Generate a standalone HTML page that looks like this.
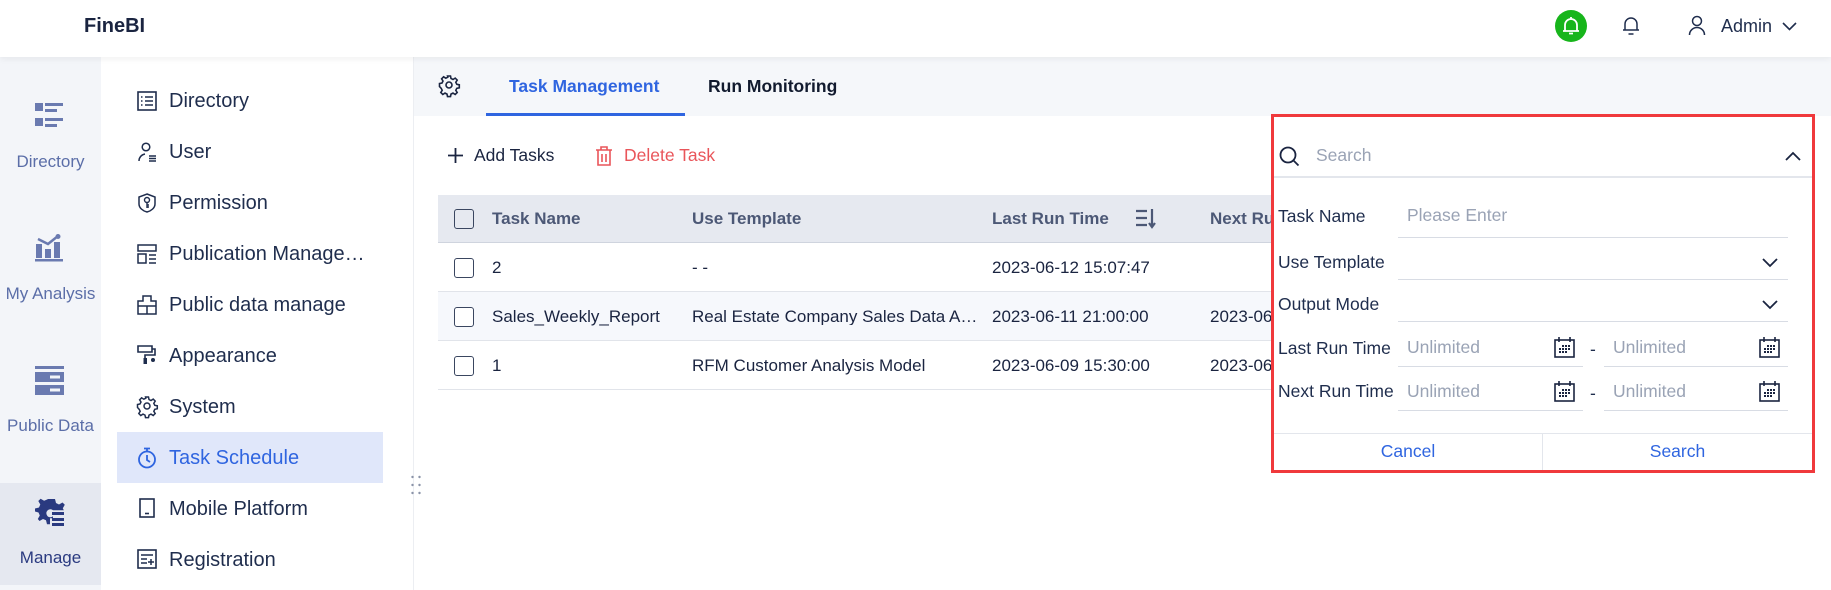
<!DOCTYPE html>
<html><head><meta charset="utf-8"><style>
*{box-sizing:border-box;margin:0;padding:0}
body{width:1831px;height:590px;overflow:hidden;background:#fff;font-family:"Liberation Sans",sans-serif;color:#1f2d4d;position:relative}
.a{position:absolute}
.t{position:absolute;white-space:nowrap;line-height:1}
svg{position:absolute;overflow:visible}
</style></head><body>
<!-- header -->
<div class="a" style="left:0;top:0;width:1831px;height:57px;background:#fff;box-shadow:0 2px 6px rgba(0,0,0,0.06);z-index:2"></div>
<div class="t" style="left:84px;top:16px;font-size:20px;font-weight:bold;color:#1a2440;z-index:3">FineBI</div>
<div class="a" style="left:1555px;top:10px;width:32px;height:32px;border-radius:50%;background:#17b51b;z-index:3"></div>
<svg style="left:1562px;top:16px;z-index:4" width="18" height="20" viewBox="0 0 18 20"><path d="M3 15V9a6 6 0 0 1 12 0v6h2H1h2M7 17.5h4M9 1v2" fill="none" stroke="#fff" stroke-width="1.8"/></svg>
<svg style="left:1622px;top:15px;z-index:4" width="18" height="22" viewBox="0 0 18 22"><path d="M3 15V9a6 6 0 0 1 12 0v6h2H1h2M6.5 19h5" fill="none" stroke="#1f2d4d" stroke-width="1.5"/></svg>
<svg style="left:1688px;top:15px;z-index:4" width="18" height="22" viewBox="0 0 18 22"><circle cx="9" cy="6" r="4.5" fill="none" stroke="#1f2d4d" stroke-width="1.5"/><path d="M1.5 20a7.5 7.5 0 0 1 15 0" fill="none" stroke="#1f2d4d" stroke-width="1.5"/></svg>
<div class="t" style="left:1721px;top:17px;font-size:18px;color:#1f2d4d;z-index:4">Admin</div>
<svg style="left:1782px;top:22px;z-index:4" width="15" height="9" viewBox="0 0 15 9"><path d="M1 1l6.5 6.5L14 1" fill="none" stroke="#1f2d4d" stroke-width="1.6"/></svg>

<!-- left rail -->
<div class="a" style="left:0;top:57px;width:101px;height:533px;background:#f3f5f9"></div>
<div class="a" style="left:0;top:483px;width:101px;height:102px;background:#e5e8f0"></div>
<svg style="left:35px;top:103px" width="28" height="26" viewBox="0 0 28 26"><g fill="#6a7ab0"><rect x="0" y="0" width="8" height="8"/><rect x="0" y="15" width="8" height="8"/><rect x="10" y="0" width="18" height="3"/><rect x="10" y="6" width="12" height="3"/><rect x="10" y="15" width="18" height="3"/><rect x="10" y="21" width="12" height="3"/></g></svg>
<div class="t" style="left:0;width:101px;text-align:center;top:153px;font-size:17px;color:#5b6ea8">Directory</div>
<svg style="left:35px;top:234px" width="28" height="28" viewBox="0 0 28 28"><g fill="#6a7ab0"><rect x="1" y="10" width="6" height="14"/><rect x="10" y="15" width="6" height="9"/><rect x="19" y="8" width="6" height="16"/><rect x="0" y="25" width="28" height="2.5"/></g><path d="M3 5l10 5 10-8" fill="none" stroke="#6a7ab0" stroke-width="2.5"/><circle cx="23" cy="2.5" r="2.5" fill="#6a7ab0"/></svg>
<div class="t" style="left:0;width:101px;text-align:center;top:285px;font-size:17px;color:#5b6ea8">My Analysis</div>
<svg style="left:35px;top:366px" width="29" height="29" viewBox="0 0 29 29"><g fill="#6a7ab0"><rect x="0" y="0" width="29" height="3"/><rect x="0" y="6" width="29" height="10"/><rect x="0" y="19" width="29" height="10"/></g><rect x="15" y="9.5" width="10" height="3" fill="#f3f5f9"/><rect x="15" y="22.5" width="10" height="3" fill="#f3f5f9"/></svg>
<div class="t" style="left:0;width:101px;text-align:center;top:417px;font-size:17px;color:#5b6ea8">Public Data</div>
<svg style="left:35px;top:498px" width="30" height="28" viewBox="0 0 30 28"><path d="M14 0l3 0 1 4 3 1.5 3.5-2 2.3 2.3-2 3.5 1 2H15a4 4 0 1 0 0 6v2H12v6H9l-1-4-3-1.3-3.5 2L-.2 20l2-3.5L.5 13.5-3 12.5v-3l4-1 1.3-3-2-3.5L2.6-.2l3.5 2 3-1.3L10 0z" transform="translate(3 1)" fill="#2a3a80"/><rect x="17" y="14" width="12" height="3" fill="#2a3a80"/><rect x="17" y="20" width="12" height="3" fill="#2a3a80"/><rect x="17" y="25" width="12" height="3" fill="#2a3a80"/></svg>
<div class="t" style="left:0;width:101px;text-align:center;top:549px;font-size:17px;color:#2a3a80">Manage</div>

<!-- second nav -->
<div class="a" style="left:413px;top:57px;width:1px;height:533px;background:#eceef2"></div>
<div class="a" style="left:117px;top:432px;width:266px;height:51px;background:#e0e7fa"></div>
<svg style="left:137px;top:91px" width="20" height="20" viewBox="0 0 20 20"><rect x="1" y="1" width="18" height="18" fill="none" stroke="#1f2d4d" stroke-width="1.6"/><path d="M4 6h1.5M8 6h8M4 10h1.5M8 10h8M4 14h1.5M8 14h8" stroke="#1f2d4d" stroke-width="1.5"/></svg>
<svg style="left:137px;top:142px" width="20" height="20" viewBox="0 0 20 20"><circle cx="9" cy="5" r="3.8" fill="none" stroke="#1f2d4d" stroke-width="1.5"/><path d="M2 19a7 7 0 0 1 6-7M12 14h7M12 16.5h7M12 19h7" fill="none" stroke="#1f2d4d" stroke-width="1.5"/></svg>
<svg style="left:137px;top:193px" width="20" height="20" viewBox="0 0 20 20"><path d="M10 1l8 3v7c0 4-4 7-8 8-4-1-8-4-8-8V4z" fill="none" stroke="#1f2d4d" stroke-width="1.5"/><circle cx="10" cy="7" r="2.5" fill="none" stroke="#1f2d4d" stroke-width="1.4"/><path d="M10 9.5V15M10 12h2M10 14h2" stroke="#1f2d4d" stroke-width="1.4"/></svg>
<svg style="left:137px;top:244px" width="20" height="20" viewBox="0 0 20 20"><path d="M1 1h18v6H1zM1 10h8v9H1zM12 11h7M12 15h7M12 19h7" fill="none" stroke="#1f2d4d" stroke-width="1.5"/></svg>
<svg style="left:137px;top:295px" width="20" height="20" viewBox="0 0 20 20"><path d="M6 1h8v5h5v13H1V6h5zM1 11h18M10 11v8" fill="none" stroke="#1f2d4d" stroke-width="1.5"/></svg>
<svg style="left:137px;top:345px" width="20" height="20" viewBox="0 0 20 20"><path d="M1 1h14v6H1zM15 4h3v6H8v3" fill="none" stroke="#1f2d4d" stroke-width="1.6"/><rect x="6.5" y="13" width="3.5" height="6" fill="#1f2d4d"/><circle cx="16" cy="15" r="2" fill="#1f2d4d"/></svg>
<svg style="left:137px;top:396px" width="20" height="20" viewBox="0 0 20 20"><path d="M8.5 1h3l.5 2.5 2 1 2.2-1.4 2 2-1.4 2.2 1 2 2.5.5v3l-2.5.5-1 2 1.4 2.2-2 2-2.2-1.4-2 1-.5 2.5h-3l-.5-2.5-2-1-2.2 1.4-2-2 1.4-2.2-1-2L.5 11.5v-3L3 8l1-2-1.4-2.2 2-2L6.8 3.2l2-1z" fill="none" stroke="#1f2d4d" stroke-width="1.5"/><circle cx="10" cy="10" r="3" fill="none" stroke="#1f2d4d" stroke-width="1.5"/></svg>
<svg style="left:137px;top:447px" width="20" height="22" viewBox="0 0 20 22"><circle cx="10" cy="12.5" r="8" fill="none" stroke="#2f65e0" stroke-width="1.8"/><path d="M7 1.5h6M10 1.5v3M10 8v5l3 2" fill="none" stroke="#2f65e0" stroke-width="1.8"/></svg>
<svg style="left:139px;top:498px" width="16" height="20" viewBox="0 0 16 20"><rect x="1" y="1" width="14" height="18" fill="none" stroke="#1f2d4d" stroke-width="1.6"/><path d="M6 15.5h4" stroke="#1f2d4d" stroke-width="1.6"/></svg>
<svg style="left:137px;top:549px" width="20" height="20" viewBox="0 0 20 20"><rect x="1" y="1" width="18" height="18" fill="none" stroke="#1f2d4d" stroke-width="1.6"/><path d="M4 6h12M4 10h6M4 14h6M14 10v6M11 13h6" stroke="#1f2d4d" stroke-width="1.5"/></svg>
<div class="t" style="left:169px;top:91px;font-size:20px">Directory</div>
<div class="t" style="left:169px;top:142px;font-size:20px">User</div>
<div class="t" style="left:169px;top:193px;font-size:20px">Permission</div>
<div class="t" style="left:169px;top:244px;font-size:20px">Publication Manage…</div>
<div class="t" style="left:169px;top:295px;font-size:20px">Public data manage</div>
<div class="t" style="left:169px;top:346px;font-size:20px">Appearance</div>
<div class="t" style="left:169px;top:397px;font-size:20px">System</div>
<div class="t" style="left:169px;top:448px;font-size:20px;color:#2f65e0">Task Schedule</div>
<div class="t" style="left:169px;top:499px;font-size:20px">Mobile Platform</div>
<div class="t" style="left:169px;top:550px;font-size:20px">Registration</div>
<svg style="left:411px;top:475px" width="10" height="20" viewBox="0 0 10 20"><g fill="#8a93a8"><circle cx="1.5" cy="2" r="1.2"/><circle cx="8.5" cy="2" r="1.2"/><circle cx="1.5" cy="10" r="1.2"/><circle cx="8.5" cy="10" r="1.2"/><circle cx="1.5" cy="18" r="1.2"/><circle cx="8.5" cy="18" r="1.2"/></g></svg>

<!-- main -->
<div class="a" style="left:414px;top:57px;width:1417px;height:59px;background:#f5f7fa"></div>
<svg style="left:439px;top:75px" width="20" height="20" viewBox="0 0 20 20"><path d="M8.5 1h3l.5 2.5 2 1 2.2-1.4 2 2-1.4 2.2 1 2 2.5.5v3l-2.5.5-1 2 1.4 2.2-2 2-2.2-1.4-2 1-.5 2.5h-3l-.5-2.5-2-1-2.2 1.4-2-2 1.4-2.2-1-2L.5 11.5v-3L3 8l1-2-1.4-2.2 2-2L6.8 3.2l2-1z" fill="none" stroke="#1a2440" stroke-width="1.6"/><circle cx="10" cy="10" r="3" fill="none" stroke="#1a2440" stroke-width="1.6"/></svg>
<div class="t" style="left:509px;top:78px;font-size:17.5px;font-weight:bold;color:#2f65e0">Task Management</div>
<div class="a" style="left:486px;top:113px;width:199px;height:3px;background:#2f65e0"></div>
<div class="t" style="left:708px;top:78px;font-size:17.5px;font-weight:bold;color:#111a2e">Run Monitoring</div>
<svg style="left:448px;top:148px" width="15" height="15" viewBox="0 0 15 15"><path d="M7.5 0v15M0 7.5h15" stroke="#1a2440" stroke-width="1.8"/></svg>
<div class="t" style="left:474px;top:147px;font-size:17.5px;color:#1a2440">Add Tasks</div>
<svg style="left:595px;top:146px" width="18" height="20" viewBox="0 0 18 20"><path d="M1 4h16M6 4V1h6v3M3 4v15h12V4M7 8v8M11 8v8" fill="none" stroke="#e9555a" stroke-width="1.6"/></svg>
<div class="t" style="left:624px;top:147px;font-size:17.5px;color:#e9555a">Delete Task</div>

<!-- table -->
<div class="a" style="left:438px;top:195px;width:840px;height:48px;background:#e6e9f0;border-bottom:1px solid #cfd4de"></div>
<div class="a" style="left:438px;top:243px;width:840px;height:49px;border-bottom:1px solid #e1e4ea"></div>
<div class="a" style="left:438px;top:292px;width:840px;height:49px;background:#f6f8fc;border-bottom:1px solid #e1e4ea"></div>
<div class="a" style="left:438px;top:341px;width:840px;height:49px;border-bottom:1px solid #e1e4ea"></div>
<div class="a" style="left:454px;top:209px;width:20px;height:20px;border:1.5px solid #3a4660;border-radius:3px"></div>
<div class="a" style="left:454px;top:258px;width:20px;height:20px;border:1.5px solid #3a4660;border-radius:3px;background:#fff"></div>
<div class="a" style="left:454px;top:307px;width:20px;height:20px;border:1.5px solid #3a4660;border-radius:3px;background:#fff"></div>
<div class="a" style="left:454px;top:356px;width:20px;height:20px;border:1.5px solid #3a4660;border-radius:3px;background:#fff"></div>
<div class="t" style="left:492px;top:210px;font-size:17px;font-weight:bold;color:#4c5876">Task Name</div>
<div class="t" style="left:692px;top:210px;font-size:17px;font-weight:bold;color:#4c5876">Use Template</div>
<div class="t" style="left:992px;top:210px;font-size:17px;font-weight:bold;color:#4c5876">Last Run Time</div>
<svg style="left:1135px;top:207px" width="22" height="22" viewBox="0 0 22 22"><path d="M1 4h11M1 11h11M1 18h11M17 2v18M14 16l3 4 3-4" fill="none" stroke="#4c5876" stroke-width="2.2"/></svg>
<div class="t" style="left:1210px;top:210px;font-size:17px;font-weight:bold;color:#4c5876">Next Ru</div>
<div class="t" style="left:492px;top:259px;font-size:17px;color:#1a2440">2</div>
<div class="t" style="left:692px;top:259px;font-size:17px;color:#1a2440">- -</div>
<div class="t" style="left:992px;top:259px;font-size:17px;color:#1a2440">2023-06-12 15:07:47</div>
<div class="t" style="left:492px;top:308px;font-size:17px;color:#1a2440">Sales_Weekly_Report</div>
<div class="t" style="left:692px;top:308px;font-size:17px;color:#1a2440;width:292px;overflow:hidden;text-overflow:ellipsis">Real Estate Company Sales Data Analysis</div>
<div class="t" style="left:992px;top:308px;font-size:17px;color:#1a2440">2023-06-11 21:00:00</div>
<div class="t" style="left:1210px;top:308px;font-size:17px;color:#1a2440">2023-06</div>
<div class="t" style="left:492px;top:357px;font-size:17px;color:#1a2440">1</div>
<div class="t" style="left:692px;top:357px;font-size:17px;color:#1a2440">RFM Customer Analysis Model</div>
<div class="t" style="left:992px;top:357px;font-size:17px;color:#1a2440">2023-06-09 15:30:00</div>
<div class="t" style="left:1210px;top:357px;font-size:17px;color:#1a2440">2023-06</div>

<!-- panel -->
<div class="a" style="left:1271px;top:114px;width:544px;height:359px;background:#fff;border:3px solid #f0393c;z-index:5"></div>
<div class="a" style="left:1274px;top:176px;width:538px;height:2px;background:#e3e6ec;z-index:6"></div>
<svg style="left:1279px;top:146px;z-index:6" width="21" height="21" viewBox="0 0 21 21"><circle cx="9" cy="9" r="7.5" fill="none" stroke="#1a2440" stroke-width="1.8"/><path d="M14.5 14.5l5 5" stroke="#1a2440" stroke-width="1.8"/></svg>
<div class="t" style="left:1316px;top:147px;font-size:17.5px;color:#9aa3b5;z-index:6">Search</div>
<svg style="left:1785px;top:152px;z-index:6" width="16" height="9" viewBox="0 0 16 9"><path d="M1 8l7-7 7 7" fill="none" stroke="#1a2440" stroke-width="1.8"/></svg>
<div class="t" style="left:1278px;top:208px;font-size:17.5px;z-index:6">Task Name</div>
<div class="t" style="left:1407px;top:207px;font-size:17.5px;color:#9aa3b5;z-index:6">Please Enter</div>
<div class="a" style="left:1398px;top:237px;width:390px;height:1px;background:#d8dce4;z-index:6"></div>
<div class="t" style="left:1278px;top:254px;font-size:17.5px;z-index:6">Use Template</div>
<svg style="left:1762px;top:258px;z-index:6" width="16" height="9" viewBox="0 0 16 9"><path d="M1 1l7 7 7-7" fill="none" stroke="#1a2440" stroke-width="1.8"/></svg>
<div class="a" style="left:1398px;top:279px;width:390px;height:1px;background:#d8dce4;z-index:6"></div>
<div class="t" style="left:1278px;top:296px;font-size:17.5px;z-index:6">Output Mode</div>
<svg style="left:1762px;top:300px;z-index:6" width="16" height="9" viewBox="0 0 16 9"><path d="M1 1l7 7 7-7" fill="none" stroke="#1a2440" stroke-width="1.8"/></svg>
<div class="a" style="left:1398px;top:321px;width:390px;height:1px;background:#d8dce4;z-index:6"></div>
<div class="t" style="left:1278px;top:340px;font-size:17.5px;z-index:6">Last Run Time</div>
<div class="t" style="left:1278px;top:383px;font-size:17.5px;z-index:6">Next Run Time</div>
<div class="t" style="left:1407px;top:339px;font-size:17.5px;color:#9aa3b5;z-index:6">Unlimited</div>
<div class="t" style="left:1613px;top:339px;font-size:17.5px;color:#9aa3b5;z-index:6">Unlimited</div>
<div class="t" style="left:1407px;top:383px;font-size:17.5px;color:#9aa3b5;z-index:6">Unlimited</div>
<div class="t" style="left:1613px;top:383px;font-size:17.5px;color:#9aa3b5;z-index:6">Unlimited</div>
<div class="t" style="left:1590px;top:341px;font-size:17.5px;z-index:6">-</div>
<div class="t" style="left:1590px;top:385px;font-size:17.5px;z-index:6">-</div>
<div class="a" style="left:1398px;top:366px;width:185px;height:1px;background:#d8dce4;z-index:6"></div>
<div class="a" style="left:1604px;top:366px;width:184px;height:1px;background:#d8dce4;z-index:6"></div>
<div class="a" style="left:1398px;top:410px;width:185px;height:1px;background:#d8dce4;z-index:6"></div>
<div class="a" style="left:1604px;top:410px;width:184px;height:1px;background:#d8dce4;z-index:6"></div>
<svg style="left:1554px;top:337px;z-index:6" width="21" height="21" viewBox="0 0 21 21"><g id="cal"><rect x="1" y="3" width="19" height="17" fill="none" stroke="#1a2440" stroke-width="1.6"/><path d="M5 0v5M16 0v5" stroke="#1a2440" stroke-width="1.6"/><g fill="#1a2440"><rect x="8" y="8" width="2" height="2"/><rect x="11" y="8" width="2" height="2"/><rect x="14" y="8" width="2" height="2"/><rect x="5" y="11" width="2" height="2"/><rect x="8" y="11" width="2" height="2"/><rect x="11" y="11" width="2" height="2"/><rect x="14" y="11" width="2" height="2"/><rect x="5" y="14" width="2" height="2"/><rect x="8" y="14" width="2" height="2"/><rect x="11" y="14" width="2" height="2"/></g></g></svg>
<svg style="left:1759px;top:337px;z-index:6" width="21" height="21" viewBox="0 0 21 21"><use href="#cal"/></svg>
<svg style="left:1554px;top:381px;z-index:6" width="21" height="21" viewBox="0 0 21 21"><use href="#cal"/></svg>
<svg style="left:1759px;top:381px;z-index:6" width="21" height="21" viewBox="0 0 21 21"><use href="#cal"/></svg>
<div class="a" style="left:1274px;top:433px;width:538px;height:1px;background:#e3e6ec;z-index:6"></div>
<div class="a" style="left:1542px;top:433px;width:1px;height:37px;background:#e3e6ec;z-index:6"></div>
<div class="t" style="left:1274px;width:268px;text-align:center;top:443px;font-size:17.5px;color:#2f65e0;z-index:6">Cancel</div>
<div class="t" style="left:1543px;width:269px;text-align:center;top:443px;font-size:17.5px;color:#2f65e0;z-index:6">Search</div>
</body></html>
